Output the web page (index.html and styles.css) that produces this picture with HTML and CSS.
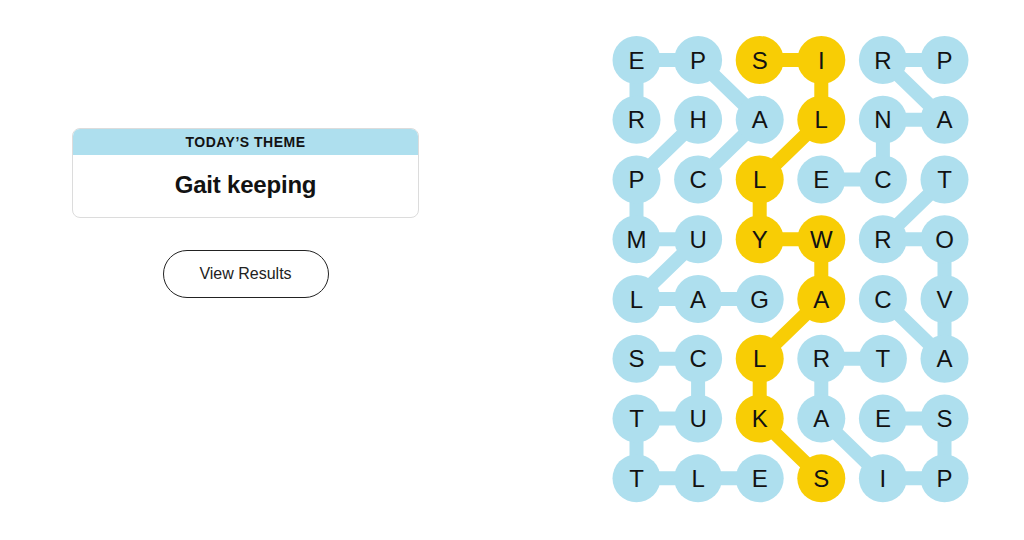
FILE: index.html
```html
<!DOCTYPE html>
<html lang="en">
<head>
<meta charset="utf-8">
<title>Strands</title>
<link rel="stylesheet" href="styles.css">
</head>
<body>
<main class="page">
  <section class="side">
    <div class="theme-card">
      <div class="theme-label">TODAY’S THEME</div>
      <div class="theme-title">Gait keeping</div>
    </div>
    <button class="results-btn" type="button">View Results</button>
  </section>
  <section class="board">
    <svg class="board-svg" width="384" height="492" viewBox="0 0 384 492" xmlns="http://www.w3.org/2000/svg">
      <g class="links blue" stroke="#aedfee" stroke-width="14" stroke-linecap="round" fill="none">
        <!-- CAPER -->
        <polyline points="98.1,155.5 159.7,95.8 98.1,36 36.5,36 36.5,95.8"/>
        <!-- GALUMPH -->
        <polyline points="159.7,275 98.1,275 36.5,275 98.1,215.3 36.5,215.3 36.5,155.5 98.1,95.8"/>
        <!-- SCUTTLE -->
        <polyline points="36.5,334.8 98.1,334.8 98.1,394.6 36.5,394.6 36.5,454.3 98.1,454.3 159.7,454.3"/>
        <!-- PRANCE -->
        <polyline points="344.5,36 282.9,36 344.5,95.8 282.9,95.8 282.9,155.5 221.3,155.5"/>
        <!-- CAVORT -->
        <polyline points="282.9,275 344.5,334.8 344.5,275 344.5,215.3 282.9,215.3 344.5,155.5"/>
        <!-- TRAIPSE -->
        <polyline points="282.9,334.8 221.3,334.8 221.3,394.6 282.9,454.3 344.5,454.3 344.5,394.6 282.9,394.6"/>
      </g>
      <g class="links yellow" stroke="#f8cd05" stroke-width="14" stroke-linecap="round" stroke-linejoin="round" fill="none">
        <polyline points="159.7,36 221.3,36 221.3,95.8 159.7,155.5 159.7,215.3 221.3,215.3 221.3,275 159.7,334.8 159.7,394.6 221.3,454.3"/>
      </g>
      <g class="nodes" id="nodes"></g>
    </svg>
  </section>
</main>
<script>
(function () {
  var rows = ["EPSIRP", "RHALNA", "PCLECT", "MUYWRO", "LAGACV", "SCLRTA", "TUKAES", "TLESIP"];
  var yellow = {"0,2":1, "0,3":1, "1,3":1, "2,2":1, "3,2":1, "3,3":1, "4,3":1, "5,2":1, "6,2":1, "7,3":1};
  var g = document.getElementById("nodes");
  var ns = "http://www.w3.org/2000/svg";
  for (var r = 0; r < rows.length; r++) {
    for (var c = 0; c < 6; c++) {
      var cx = 36.5 + 61.6 * c;
      var cy = 36 + 59.76 * r;
      var circ = document.createElementNS(ns, "circle");
      circ.setAttribute("cx", cx);
      circ.setAttribute("cy", cy);
      circ.setAttribute("r", 24);
      circ.setAttribute("class", yellow[r + "," + c] ? "node spangram" : "node");
      g.appendChild(circ);
      var t = document.createElementNS(ns, "text");
      t.setAttribute("x", cx);
      t.setAttribute("y", cy + 8.5);
      t.setAttribute("class", "letter");
      t.textContent = rows[r][c];
      g.appendChild(t);
    }
  }
})();
</script>
</body>
</html>
```

FILE: styles.css
```css
* { box-sizing: border-box; }

html, body {
  margin: 0;
  padding: 0;
  background: #ffffff;
}

body {
  font-family: "Liberation Sans", Arial, sans-serif;
  color: #121212;
}

.page {
  display: flex;
  width: 1024px;
  height: 540px;
}

.side {
  display: flex;
  flex-direction: column;
  align-items: center;
  width: 347px;
  margin-left: 72px;
  padding-top: 128px;
}

.theme-card {
  width: 347px;
  border: 1px solid #dcdcdc;
  border-radius: 8px;
  overflow: hidden;
  background: #fff;
}

.theme-label {
  height: 26px;
  line-height: 27px;
  background: #aedfee;
  text-align: center;
  font-size: 14px;
  font-weight: 700;
  letter-spacing: 0.5px;
  color: #121212;
}

.theme-title {
  height: 62px;
  line-height: 60px;
  text-align: center;
  font-size: 24px;
  font-weight: 700;
  letter-spacing: -0.2px;
  color: #121212;
}

.results-btn {
  margin-top: 32px;
  width: 166px;
  height: 48px;
  border: 1px solid #222;
  border-radius: 24px;
  background: #fff;
  font-family: "Liberation Sans", Arial, sans-serif;
  font-size: 16px;
  color: #222;
  padding: 0;
}

.board {
  margin-left: 181px;
  padding-top: 24px;
}

.board-svg {
  display: block;
}

.node {
  fill: #aedfee;
}

.node.spangram {
  fill: #f8cd05;
}

.letter {
  font-family: "Liberation Sans", Arial, sans-serif;
  font-size: 24px;
  fill: #121212;
  text-anchor: middle;
}
```
